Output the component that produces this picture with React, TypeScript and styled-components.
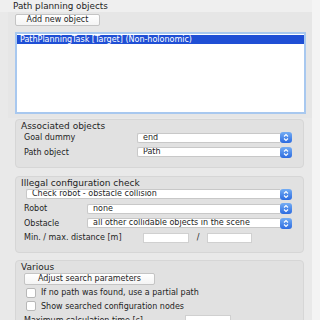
import React from 'react'
import styled, { createGlobalStyle } from 'styled-components'

const GlobalStyle = createGlobalStyle`
  html, body {
    margin: 0;
    padding: 0;
    background: #f4f4f4;
  }
  body {
    font-family: "DejaVu Sans", "Liberation Sans", sans-serif;
    color: #1e1e1e;
  }
`

const Screen = styled.div`
  width: 320px;
  height: 320px;
  overflow: hidden;
  background: #f4f4f4;
`

const Window = styled.div`
  width: 312px;
  height: 320px;
  background: #e9e9e9;
  display: flex;
  flex-direction: column;
`

const PanelTitle = styled.div`
  height: 12px;
  line-height: 12px;
  padding-left: 13px;
  font-size: 8.8px;
  background: #efefef;
  white-space: nowrap;
`

const TopFrame = styled.div`
  margin-left: 8px;
  background: #e6e6e6;
  padding: 2px 6px 4px 7px;
  display: flex;
  flex-direction: column;
  align-items: flex-start;
  gap: 6px;
`

const PushButton = styled.div<{ $width: number }>`
  box-sizing: border-box;
  width: ${p => p.$width}px;
  height: 12px;
  line-height: 10px;
  text-align: center;
  font-size: 8px;
  background: linear-gradient(#ffffff, #f4f4f4);
  border: 1px solid #c4c4c4;
  border-radius: 2px;
  white-space: nowrap;
`

const ListBox = styled.div`
  box-sizing: border-box;
  width: 100%;
  height: 82px;
  background: #ffffff;
  border: 2px solid #a8c8ef;
  padding: 1px 0;
`

const ListItem = styled.div<{ $selected?: boolean }>`
  height: 9px;
  line-height: 9px;
  font-size: 8px;
  padding-left: 3px;
  white-space: nowrap;
  background: ${p => (p.$selected ? '#1f4fd5' : 'transparent')};
  color: ${p => (p.$selected ? '#ffffff' : '#1e1e1e')};
`

const Groups = styled.div`
  padding: 0 8px 0 15px;
  display: flex;
  flex-direction: column;
`

const GroupBox = styled.div<{ $top: number; $bottom: number }>`
  margin-top: ${p => p.$top}px;
  background: #e1e1e1;
  border: 1px solid #d6d6d6;
  border-radius: 4px;
  padding: 1px 11px ${p => p.$bottom}px 8px;
  display: flex;
  flex-direction: column;
  gap: 3.5px;
`

const GroupTitle = styled.div`
  height: 10px;
  line-height: 10px;
  margin-left: -3px;
  margin-bottom: -2.5px;
  font-size: 9px;
  white-space: nowrap;
`

const Row = styled.div<{ $height?: number; $indent?: number }>`
  display: flex;
  align-items: center;
  height: ${p => p.$height ?? 11}px;
  padding-left: ${p => p.$indent ?? 0}px;
`

const Label = styled.div<{ $width?: number }>`
  flex: 0 0 ${p => (p.$width ? `${p.$width}px` : 'auto')};
  font-size: 8px;
  white-space: nowrap;
`

const Combo = styled.div`
  flex: 1;
  display: flex;
  height: 11px;
`

const ComboField = styled.div`
  flex: 1;
  box-sizing: border-box;
  height: 10px;
  margin-top: 0.5px;
  line-height: 8px;
  padding-left: 5px;
  font-size: 8px;
  background: #ffffff;
  border: 1px solid #c8c8c8;
  border-right: none;
  border-radius: 2px 0 0 2px;
  white-space: nowrap;
  overflow: hidden;
`

const Stepper = styled.div`
  flex: 0 0 12px;
  height: 11px;
  border-radius: 3px;
  background: linear-gradient(#74adf4, #2c6be0);
  display: flex;
  align-items: center;
  justify-content: center;
`

const TextField = styled.div<{ $width: number }>`
  box-sizing: border-box;
  width: ${p => p.$width}px;
  height: 10px;
  background: #ffffff;
  border: 1px solid #d0d0d0;
`

const Slash = styled.div`
  width: 18px;
  text-align: center;
  font-size: 8px;
`

const CheckBox = styled.div`
  box-sizing: border-box;
  width: 10px;
  height: 10px;
  margin-left: 2px;
  margin-right: 5px;
  background: #ffffff;
  border: 1px solid #b8b8b8;
  border-radius: 2px;
`

const Arrows = () => (
  <svg width="8" height="9" viewBox="0 0 8 9">
    <path d="M2 3.5 L4 1.5 L6 3.5 M2 5.5 L4 7.5 L6 5.5" fill="none" stroke="#ffffff" strokeWidth="1.1" />
  </svg>
)

const ComboBox = ({ value }: { value: string }) => (
  <Combo>
    <ComboField>{value}</ComboField>
    <Stepper>
      <Arrows />
    </Stepper>
  </Combo>
)

export default function App() {
  return (
    <>
      <GlobalStyle />
      <Screen>
        <Window>
          <PanelTitle>Path planning objects</PanelTitle>
          <TopFrame>
            <PushButton $width={85}>Add new object</PushButton>
            <ListBox>
              <ListItem $selected>PathPlanningTask [Target] (Non-holonomic)</ListItem>
            </ListBox>
          </TopFrame>

          <Groups>
            <GroupBox $top={1} $bottom={9}>
              <GroupTitle>Associated objects</GroupTitle>
              <Row>
                <Label $width={113}>Goal dummy</Label>
                <ComboBox value="end" />
              </Row>
              <Row>
                <Label $width={113}>Path object</Label>
                <ComboBox value="Path" />
              </Row>
            </GroupBox>

            <GroupBox $top={8} $bottom={9}>
              <GroupTitle>Illegal configuration check</GroupTitle>
              <Row $indent={2}>
                <ComboBox value="Check robot - obstacle collision" />
              </Row>
              <Row>
                <Label $width={63}>Robot</Label>
                <ComboBox value="none" />
              </Row>
              <Row>
                <Label $width={63}>Obstacle</Label>
                <ComboBox value="all other collidable objects in the scene" />
              </Row>
              <Row>
                <Label $width={119}>Min. / max. distance [m]</Label>
                <TextField $width={46} />
                <Slash>/</Slash>
                <TextField $width={45} />
              </Row>
            </GroupBox>

            <GroupBox $top={7} $bottom={20}>
              <GroupTitle>Various</GroupTitle>
              <Row>
                <PushButton $width={131}>Adjust search parameters</PushButton>
              </Row>
              <Row $height={10}>
                <CheckBox />
                <Label>If no path was found, use a partial path</Label>
              </Row>
              <Row $height={10}>
                <CheckBox />
                <Label>Show searched configuration nodes</Label>
              </Row>
              <Row>
                <Label $width={161}>Maximum calculation time [s]</Label>
                <TextField $width={46} />
              </Row>
            </GroupBox>
          </Groups>
        </Window>
      </Screen>
    </>
  )
}
